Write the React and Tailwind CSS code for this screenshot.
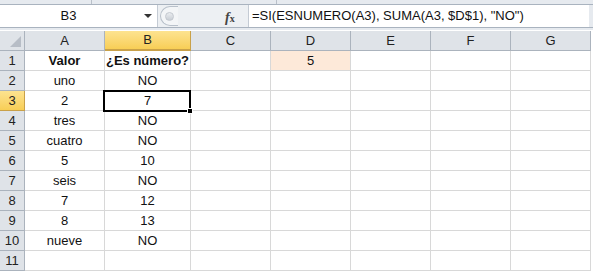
import React from "react";

const cols = [
    { id: "A", w: "w-[80px]" },
    { id: "B", w: "w-[86px]" },
    { id: "C", w: "w-[80px]" },
    { id: "D", w: "w-[80px]" },
    { id: "E", w: "w-[80px]" },
    { id: "F", w: "w-[80px]" },
    { id: "G", w: "w-[80px]" },
];

const rows = [
    ["Valor", "¿Es número?", "", "5"],
    ["uno", "NO"],
    ["2", "7"],
    ["tres", "NO"],
    ["cuatro", "NO"],
    ["5", "10"],
    ["seis", "NO"],
    ["7", "12"],
    ["8", "13"],
    ["nueve", "NO"],
    [],
];

const App = () => {
    return (
        <div className="w-[593px] h-[272px] overflow-hidden bg-white text-[#111] font-['Liberation_Sans',Arial,sans-serif]">
            {/* top strip */}
            <div className="h-[4px] bg-[#e6eaef] flex">
                <div className="w-[92px] border-r border-[#b9c0c9]" />
                <div className="w-[185px] border-r border-[#b9c0c9]" />
            </div>

            {/* formula bar */}
            <div className="h-[24px] flex bg-[#e6eaef] border-y border-[#a9b3bf]">
                <div className="w-[158px] bg-white flex items-center relative border-r border-[#c4cbd4]">
                    <span className="flex-1 text-center text-[13px] pr-[20px]">B3</span>
                    <span className="absolute right-[5px] top-[9px] w-0 h-0 border-l-[4px] border-r-[4px] border-t-[4px] border-l-transparent border-r-transparent border-t-[#333]" />
                </div>
                <div className="w-[90px] flex items-center relative bg-[#edf0f3]">
                    <div className="ml-[2px] w-[18px] h-[20px] rounded-l-full border border-r-0 border-[#b8c0ca] bg-[#f3f5f7] flex items-center justify-center">
                        <div className="w-[9px] h-[9px] rounded-full bg-gradient-to-b from-[#e9ecef] to-[#c9ced5] border border-[#c3c8cf]" />
                    </div>
                    <span className="absolute left-[67px] top-[2px] font-['Liberation_Serif',serif] italic font-bold text-[14px] text-[#444]">f<span className="text-[10px] not-italic">x</span></span>
                </div>
                <div className="flex-1 bg-white border-l border-[#c4cbd4] mr-[4px] flex items-center pl-[3px] text-[13px] whitespace-nowrap">
                    =SI(ESNUMERO(A3), SUMA(A3, $D$1), "NO")
                </div>
            </div>
            <div className="h-[2px] bg-[#e6eaef]" />
            <div className="h-[1px] bg-white" />

            {/* grid */}
            <div className="relative">
                <div className="flex h-[20px]">
                    <div className="w-[25px] bg-[#dfe3e8] border-r border-b border-[#abb3bd] relative">
                        <div className="absolute right-[3px] bottom-[3px] w-0 h-0 border-l-[11px] border-t-[11px] border-l-transparent border-t-transparent border-b-0 border-r-0" style={{ borderBottom: "11px solid #b7bdc6" }} />
                    </div>
                    {cols.map(c => (
                        <div key={c.id} className={`${c.w} ${c.id === "B" ? "w-[86px] bg-gradient-to-b from-[#fde38f] to-[#f8ce55] border-b-[2px] border-b-[#c9a149] border-r border-r-[#c9a149]" : "bg-[#dfe3e8] border-r border-b border-[#abb3bd]"} flex items-center justify-center text-[13px] text-[#222] shrink-0`}>
                            {c.id}
                        </div>
                    ))}
                </div>
                {rows.map((r, i) => (
                    <div key={i} className="flex h-[20px]">
                        <div className={`w-[25px] shrink-0 flex items-center justify-center text-[13px] text-[#222] border-r border-b ${i === 2 ? "bg-gradient-to-b from-[#fde38f] to-[#f8ce55] border-r-[#c9a149] border-b-[#c9a149]" : "bg-[#dfe3e8] border-[#abb3bd]"}`}>
                            {i + 1}
                        </div>
                        {cols.map((c, j) => (
                            <div key={c.id} className={`${c.w} shrink-0 border-r border-b border-[#d8d8d8] flex items-center justify-center text-[13px] ${i === 0 ? "font-bold" : ""} ${i === 0 && j === 3 ? "bg-[#fde9d9] font-normal" : ""}`}>
                                {r[j] || ""}
                            </div>
                        ))}
                    </div>
                ))}

                {/* selection B3 */}
                <div className="absolute left-[103px] top-[59px] w-[88px] h-[22px] border-2 border-black pointer-events-none" />
                <div className="absolute left-[187px] top-[77px] w-[6px] h-[6px] bg-black border border-white" />
            </div>
        </div>
    );
};

export default App;
